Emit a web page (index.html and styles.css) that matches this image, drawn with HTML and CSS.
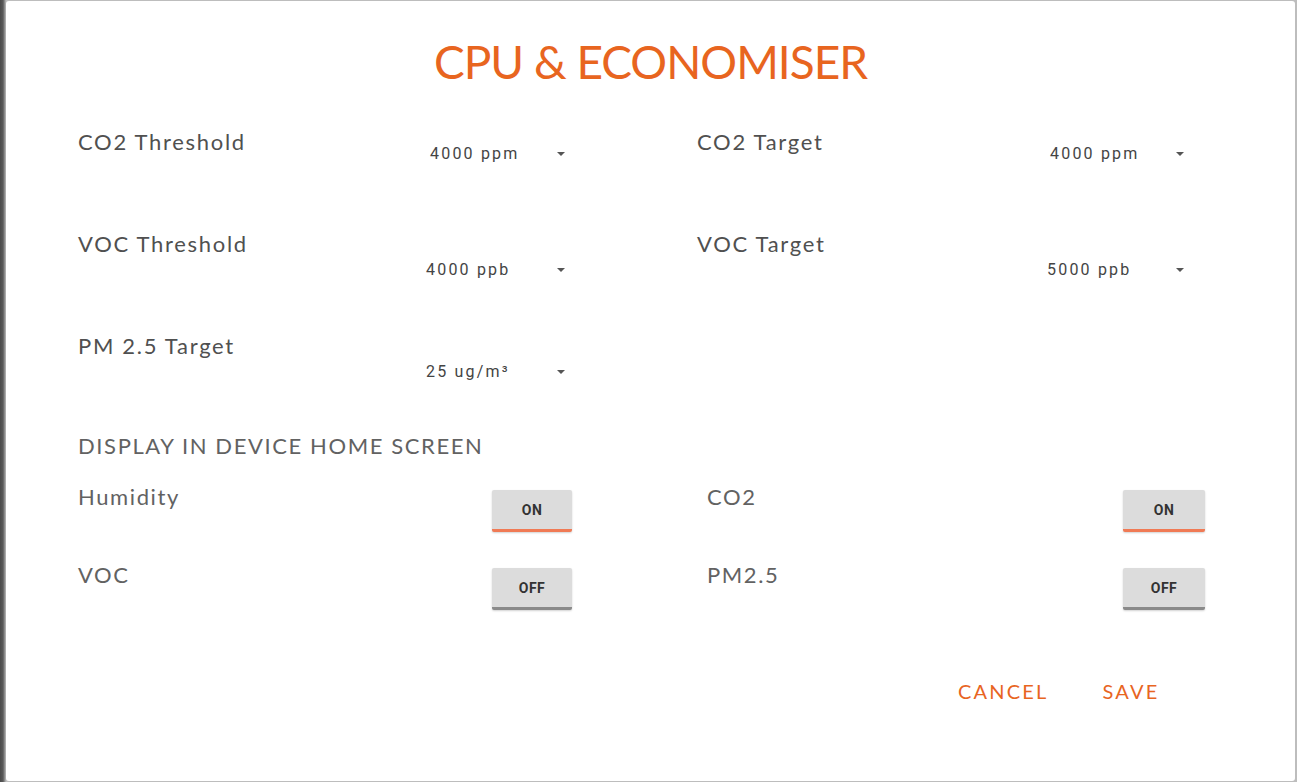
FILE: index.html
```html
<!DOCTYPE html>
<html>
<head>
<meta charset="utf-8">
<link rel="stylesheet" href="styles.css">
</head>
<body>
<div class="dialog">
  <h1 class="title">CPU &amp; ECONOMISER</h1>
  <div class="fields">
    <div class="field first">
      <div class="label">CO2 Threshold</div>
      <div class="select"><span class="value">4000 ppm</span><span class="arrow"></span></div>
    </div>
    <div class="field first right">
      <div class="label">CO2 Target</div>
      <div class="select"><span class="value">4000 ppm</span><span class="arrow"></span></div>
    </div>
    <div class="field">
      <div class="label">VOC Threshold</div>
      <div class="select"><span class="value">4000 ppb</span><span class="arrow"></span></div>
    </div>
    <div class="field right">
      <div class="label">VOC Target</div>
      <div class="select"><span class="value">5000 ppb</span><span class="arrow"></span></div>
    </div>
    <div class="field">
      <div class="label">PM 2.5 Target</div>
      <div class="select"><span class="value">25 ug/m³</span><span class="arrow"></span></div>
    </div>
  </div>
  <div class="section">DISPLAY IN DEVICE HOME SCREEN</div>
  <div class="toggles">
    <div class="toggle-row">
      <div class="tlabel">Humidity</div>
      <button class="toggle on">ON</button>
    </div>
    <div class="toggle-row right">
      <div class="tlabel">CO2</div>
      <button class="toggle on">ON</button>
    </div>
    <div class="toggle-row">
      <div class="tlabel">VOC</div>
      <button class="toggle off">OFF</button>
    </div>
    <div class="toggle-row right">
      <div class="tlabel">PM2.5</div>
      <button class="toggle off">OFF</button>
    </div>
  </div>
  <div class="actions">
    <span class="action">CANCEL</span>
    <span class="action">SAVE</span>
  </div>
</div>
</body>
</html>
```
FILE: styles.css
```css
html, body {
  margin: 0;
  padding: 0;
}
body {
  width: 1297px;
  height: 782px;
  overflow: hidden;
  background: linear-gradient(to right, #4a4a4a 0, #5a5a5a 3px, #9a9a9a 5px, #bdbdbd 6px, #bdbdbd 100%);
  font-family: Lato, "Open Sans", sans-serif;
}
.dialog {
  margin: 1px 2px 0 6px;
  height: 780px;
  background: #fff;
  border-radius: 3px;
  box-sizing: border-box;
  padding: 0 0 0 72px;
}
.title {
  margin: 0;
  padding-top: 33px;
  height: 56px;
  line-height: 56px;
  text-align: center;
  font-weight: 400;
  font-size: 46px;
  letter-spacing: -1px;
  color: #e8651f;
  padding-right: 72px;
}
.fields {
  margin-top: 39px;
  display: grid;
  grid-template-columns: 619px 520px;
  grid-auto-rows: 102px;
}
.field {
  display: flex;
  align-items: flex-start;
}
.label {
  width: 348px;
  font-size: 22px;
  line-height: 26px;
  letter-spacing: 1.7px;
  color: #505050;
}
.select {
  display: flex;
  align-items: center;
  width: 145px;
  margin-top: 29px;
  font-family: Roboto, "Liberation Sans", sans-serif;
  font-size: 16px;
  letter-spacing: 2.2px;
  color: #444;
}
.field.first .select {
  margin-top: 15px;
}
.field.first .value {
  padding-left: 4px;
}
.field.right.first .value {
  padding-left: 5px;
}
.field.right .value {
  padding-left: 2px;
}
.value {
  flex: 1;
  line-height: 20px;
}
.arrow {
  width: 0;
  height: 0;
  border-left: 4px solid transparent;
  border-right: 4px solid transparent;
  border-top: 4px solid #555;
  margin-right: 6px;
}
.section {
  margin-top: -2px;
  font-size: 22px;
  line-height: 26px;
  color: #626262;
  letter-spacing: 1.6px;
}
.toggles {
  margin-top: 25px;
  display: grid;
  grid-template-columns: 629px 510px;
  grid-auto-rows: 78px;
}
.toggle-row {
  display: flex;
  align-items: flex-start;
}
.tlabel {
  width: 414px;
  font-size: 22px;
  line-height: 26px;
  letter-spacing: 1.6px;
  color: #626262;
}
.toggle-row.right .tlabel {
  width: 416px;
}
.toggle {
  margin-top: 6px;
  width: 80px;
  height: 42px;
  border: none;
  border-radius: 2px;
  background: #dcdcdc;
  box-shadow: 0 1px 2px rgba(0,0,0,0.18);
  font-family: Roboto, "Liberation Sans", sans-serif;
  font-weight: 700;
  font-size: 14px;
  letter-spacing: 0.5px;
  color: #333;
  padding: 0;
  box-sizing: border-box;
}
.toggle-row.right .toggle {
  width: 82px;
}
.toggle.on {
  border-bottom: 3px solid #f07a55;
}
.toggle.off {
  border-bottom: 3px solid #8a8a8a;
}
.actions {
  display: flex;
  gap: 54px;
  margin-top: 39px;
  padding-left: 880px;
}
.action {
  font-size: 20px;
  line-height: 24px;
  color: #e8651f;
  letter-spacing: 2.2px;
}
```
